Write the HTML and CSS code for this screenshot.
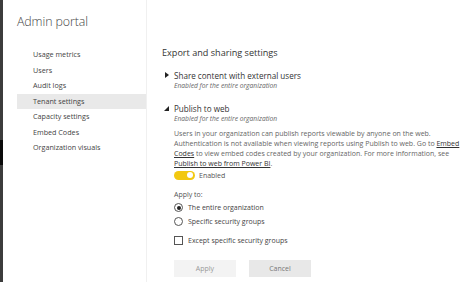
FILE: index.html
```html
<!DOCTYPE html>
<html>
<head>
<meta charset="utf-8">
<link rel="stylesheet" href="styles.css">
</head>
<body>
<div class="app">
  <div class="edge"><div class="edge-top"></div><div class="edge-mark"></div><div class="edge-bottom"></div></div>
  <aside class="sidebar">
    <h1 class="title">Admin portal</h1>
    <nav class="nav">
      <div class="nav-item">Usage metrics</div>
      <div class="nav-item">Users</div>
      <div class="nav-item">Audit logs</div>
      <div class="nav-item active">Tenant settings</div>
      <div class="nav-item">Capacity settings</div>
      <div class="nav-item">Embed Codes</div>
      <div class="nav-item">Organization visuals</div>
    </nav>
  </aside>
  <main class="main">
    <h2 class="section-title">Export and sharing settings</h2>
    <div class="setting">
      <div class="setting-head"><span class="caret caret-right"></span><span class="setting-name">Share content with external users</span></div>
      <div class="setting-sub">Enabled for the entire organization</div>
    </div>
    <div class="setting open">
      <div class="setting-head"><span class="caret caret-down"></span><span class="setting-name">Publish to web</span></div>
      <div class="setting-sub">Enabled for the entire organization</div>
      <p class="desc">Users in your organization can publish reports viewable by anyone on the web. Authentication is not available when viewing reports using Publish to web. Go to <a class="link">Embed Codes</a> to view embed codes created by your organization. For more information, see <a class="link">Publish to web from Power BI</a>.</p>
      <div class="toggle-row"><span class="toggle"><span class="knob"></span></span><span class="toggle-label">Enabled</span></div>
      <div class="apply-label">Apply to:</div>
      <div class="radio-row"><span class="radio checked"></span><span>The entire organization</span></div>
      <div class="radio-row"><span class="radio"></span><span>Specific security groups</span></div>
      <div class="check-row"><span class="checkbox"></span><span>Except specific security groups</span></div>
      <div class="buttons"><button class="btn btn-apply">Apply</button><button class="btn btn-cancel">Cancel</button></div>
    </div>
  </main>
</div>
</body>
</html>
```
FILE: styles.css
```css
html, body { margin: 0; padding: 0; background: #fff; }
body { width: 474px; height: 282px; overflow: hidden; font-family: "Open Sans", "Noto Sans", sans-serif; color: #333; }
.app { display: flex; height: 282px; }
.edge { width: 3px; display: flex; flex-direction: column; background: #3c3c3c; }
.edge-top { height: 140px; }
.edge-mark { height: 25px; background: #0a0a0a; }
.edge-bottom { flex: 1; }
.sidebar { width: 129px; padding-left: 14px; border-right: 1px solid #f0f0f0; }
.title { margin: 13px 0 0 0; font-size: 12.4px; font-weight: 300; color: #444; line-height: 18px; letter-spacing: -0.1px; }
.nav { margin-top: 16px; }
.nav-item { height: 15.5px; line-height: 15.5px; padding-left: 16px; font-size: 7.2px; color: #444; }
.nav-item.active { background: #e9e9e9; }
.main { flex: 1; padding-left: 14px; }
.section-title { margin: 46px 0 0 1px; font-size: 9.1px; font-weight: 400; color: #333; line-height: 14px; }
.setting { margin-top: 9px; padding-left: 3px; }
.setting.open { margin-top: 11px; }
.setting-head { display: flex; align-items: center; height: 12px; }
.caret { width: 10px; height: 8px; display: inline-block; position: relative; }
.caret-right::before { content: ""; position: absolute; left: 1px; top: 1px; border-left: 4px solid #222; border-top: 3px solid transparent; border-bottom: 3px solid transparent; }
.caret-down::before { content: ""; position: absolute; left: 0; top: 2px; border-right: 5px solid #222; border-top: 5px solid transparent; }
.setting-name { font-size: 8.1px; color: #333; }
.setting-sub { padding-left: 10px; font-style: italic; font-size: 6.7px; color: #666; line-height: 10px; }
.desc { margin: 5px 0 0 10px; font-size: 7px; line-height: 10px; color: #666; width: 290px; }
.link { color: #333; text-decoration: underline; }
.toggle-row { display: flex; align-items: center; margin: 2px 0 0 10px; height: 8px; gap: 4px; }
.toggle { width: 21px; height: 9px; border-radius: 5px; background: #f2c811; position: relative; display: inline-block; flex: none; }
.knob { position: absolute; right: 2px; top: 1.5px; width: 6px; height: 6px; border-radius: 50%; background: #fff; }
.toggle-label { font-size: 7px; color: #555; }
.apply-label { margin: 11px 0 0 10px; font-size: 7px; color: #555; line-height: 10px; }
.radio-row, .check-row { display: flex; align-items: center; gap: 5px; margin-left: 10px; font-size: 7px; color: #444; height: 13px; }
.radio-row { margin-top: 1px; }
.radio { width: 7px; height: 7px; border: 1px solid #555; border-radius: 50%; position: relative; }
.radio.checked::after { content: ""; position: absolute; left: 1.5px; top: 1.5px; width: 4px; height: 4px; border-radius: 50%; background: #222; }
.check-row { margin-top: 6px; }
.checkbox { width: 7px; height: 7px; border: 1px solid #555; }
.buttons { display: flex; gap: 13px; margin: 13px 0 0 10px; }
.btn { width: 62px; height: 17px; border: none; padding: 0; font-family: inherit; font-size: 7px; }
.btn-apply { background: #f3f3f3; color: #999; }
.btn-cancel { background: #e8e8e8; color: #777; }
```
